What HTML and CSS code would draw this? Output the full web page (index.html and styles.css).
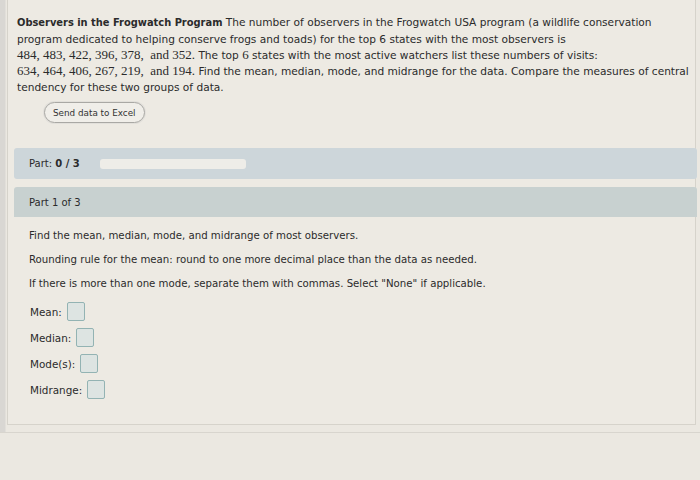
FILE: index.html
```
<!DOCTYPE html>
<html>
<head>
<meta charset="utf-8">
<link rel="stylesheet" href="styles.css">
</head>
<body>
<div class="frame">
  <div class="card">
    <p class="intro"><b>Observers in the Frogwatch Program</b> The number of observers in the Frogwatch USA program (a wildlife conservation<br>program dedicated to helping conserve frogs and toads) for the top 6 states with the most observers is<br><span class="num">484, 483, 422, 396, 378, &nbsp;and 352.</span> The top <span class="num">6</span> states with the most active watchers list these numbers of visits:<br><span class="num">634, 464, 406, 267, 219, &nbsp;and 194.</span> Find the mean, median, mode, and midrange for the data. Compare the measures of central<br>tendency for these two groups of data.</p>
    <div class="btnrow"><button class="excel">Send data to Excel</button></div>
    <div class="partbar">
      <span class="partlabel">Part: <b>0 / 3</b></span>
      <span class="track"></span>
    </div>
    <div class="section">
      <div class="sechead">Part 1 of 3</div>
      <div class="secbody">
        <p class="q">Find the mean, median, mode, and midrange of most observers.</p>
        <p class="q">Rounding rule for the mean: round to one more decimal place than the data as needed.</p>
        <p class="q">If there is more than one mode, separate them with commas. Select "None" if applicable.</p>
        <div class="answers">
          <div class="ans"><span>Mean:</span><span class="box"></span></div>
          <div class="ans"><span>Median:</span><span class="box"></span></div>
          <div class="ans"><span>Mode(s):</span><span class="box"></span></div>
          <div class="ans"><span>Midrange:</span><span class="box"></span></div>
        </div>
      </div>
    </div>
  </div>
</div>
</body>
</html>
```
FILE: styles.css
```
html, body {
  margin: 0;
  padding: 0;
  background: #ebe8e1;
}
body {
  font-family: "DejaVu Sans", Verdana, sans-serif;
  font-size: 10px;
  color: #2b2b2b;
  width: 700px;
  height: 480px;
  overflow: hidden;
}
.frame {
  border-bottom: 1px solid #d8d5ce;
  padding-bottom: 7px;
  background: linear-gradient(90deg, #d9d7d3 0, #d9d7d3 5px, #ebe8e1 6px);
}
.card {
  margin-left: 7px;
  width: 689px;
  border: 1px solid #d6d3cb;
  border-top: none;
  background: #edeae3;
  padding: 14px 0 18px 0;
  box-sizing: border-box;
}
.intro {
  margin: 0 0 0 9px;
  line-height: 16px;
  width: 680px;
  font-size: 10.6px;
  white-space: nowrap;
}
.intro b {
  font-weight: bold;
  font-size: 9.9px;
}
.num {
  font-family: "Liberation Serif", "Times New Roman", serif;
  font-size: 13px;
}
.btnrow {
  padding: 7px 0 0 36px;
}
.excel {
  font-family: "DejaVu Sans", Verdana, sans-serif;
  font-size: 8.8px;
  color: #333;
  background: #f0eee9;
  border: 1px solid #a9a8a4;
  border-radius: 11px;
  height: 21px;
  padding: 0 8px;
  box-shadow: 0 0 0 1px #e2e0db;
}
.partbar {
  margin: 25px 0 0 6px;
  width: 683px;
  height: 31px;
  background: #cdd6da;
  border-radius: 3px;
  display: flex;
  align-items: center;
  padding-left: 15px;
  box-sizing: border-box;
}
.partlabel {
  width: 71px;
}
.track {
  width: 146px;
  height: 10px;
  background: #eeede8;
  border-radius: 3px;
}
.section {
  margin: 8px 0 0 6px;
  width: 683px;
}
.sechead {
  height: 30px;
  background: #c8d1d0;
  border-radius: 3px 3px 0 0;
  display: flex;
  align-items: center;
  padding-left: 15px;
}
.secbody {
  padding: 12px 0 0 15px;
  font-size: 10.2px;
}
.q {
  margin: 0 0 10px 0;
  line-height: 14px;
}
.answers {
  margin-top: 11px;
  padding-left: 1px;
  font-size: 10.4px;
}
.ans {
  display: flex;
  align-items: center;
  gap: 5px;
  height: 19px;
  margin-bottom: 7px;
}
.box {
  width: 16px;
  height: 17px;
  border: 1px solid #93b3b3;
  border-radius: 2px;
  background: #dde4e2;
}
```
